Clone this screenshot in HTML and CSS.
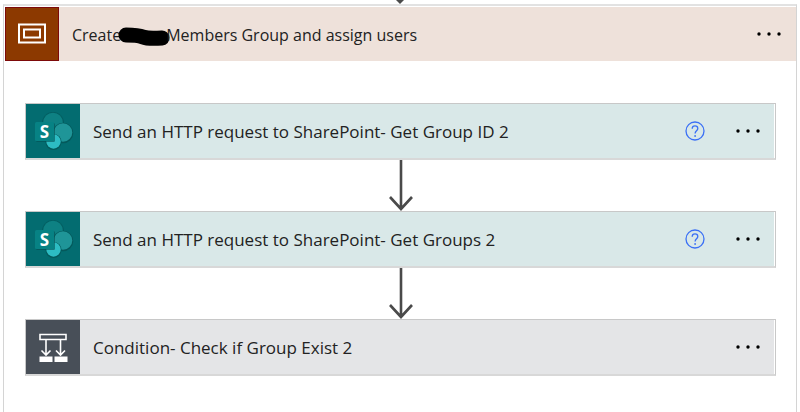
FILE: index.html
```html
<!doctype html>
<html lang="en">
  <head>
    <meta charset="UTF-8" />
    <meta name="viewport" content="width=device-width, initial-scale=1.0" />
    <title>Create Members Group and assign users</title>
    <link rel="stylesheet" href="styles.css">
  </head>
  <body>
    <!-- shared drawings -->
    <svg class="sprite" aria-hidden="true">
      <symbol id="icon-sharepoint" viewBox="0 0 54 54">
        <circle cx="27" cy="19" r="11" fill="#045e61" />
        <circle cx="27" cy="18.500" r="9.800" fill="#0e8183" />
        <circle cx="37" cy="29" r="10.300" fill="#04595b" />
        <circle cx="37" cy="28.500" r="9.300" fill="#1f9598" />
        <circle cx="27.500" cy="38" r="8" fill="#04595b" />
        <circle cx="27.500" cy="37.500" r="7.200" fill="#2dbcc3" />
        <rect x="10" y="19" width="19" height="19" rx="1.500" fill="#034f51" opacity="0.6" />
        <rect x="9" y="18" width="19" height="19" rx="1.500" fill="#078284" />
      </symbol>
      <symbol id="icon-help" viewBox="0 0 20 20">
        <circle cx="10" cy="10" r="9" fill="none" stroke="#3b70f5" stroke-width="1.300" />
        <path d="M7.200 7.700C7.200 5.900 8.400 4.900 10 4.900s2.800 1 2.800 2.600c0 2.300-2.700 2.300-2.700 5" fill="none" stroke="#3b70f5" stroke-width="1.300" />
        <circle cx="10.100" cy="15" r="0.900" fill="#3b70f5" />
      </symbol>
      <symbol id="icon-more" viewBox="0 0 26 6">
        <circle cx="3" cy="3" r="1.700" />
        <circle cx="13" cy="3" r="1.700" />
        <circle cx="23" cy="3" r="1.700" />
      </symbol>
      <symbol id="icon-arrow" viewBox="0 0 26 51">
        <path d="M13 0v49M2 37l11 12 11-12" fill="none" stroke="#4a4a4a" stroke-width="2.600" />
      </symbol>
    </svg>

    <svg class="incoming" viewBox="0 0 8 4" aria-hidden="true">
      <path d="M0 0h8L4 4z" fill="#4a4a4a" />
    </svg>

    <main class="scope">
      <header class="scope-header">
        <div class="tile tile-scope">
          <svg viewBox="0 0 54 54" aria-hidden="true">
            <path d="M14 17.500h26v18H14z M19 22.500h16v8H19z" fill="none" stroke="#fff" stroke-width="2" />
          </svg>
        </div>
        <h1 class="title">
          Create<svg class="redaction" viewBox="0 0 45 20" aria-hidden="true">
            <path d="M5 8Q17 8 22 10T41 11" fill="none" stroke="#000" stroke-width="15" stroke-linecap="round" />
          </svg>Members Group and assign users
        </h1>
        <button class="icon-btn" type="button" aria-label="Scope menu">
          <svg class="more"><use href="#icon-more" /></svg>
        </button>
      </header>

      <div class="steps">
        <section class="card card-sharepoint">
          <div class="tile">
            <svg aria-hidden="true"><use href="#icon-sharepoint" /></svg>
            <span class="tile-letter">S</span>
          </div>
          <h2 class="title">Send an HTTP request to SharePoint- Get Group ID 2</h2>
          <button class="icon-btn" type="button" aria-label="Help">
            <svg class="help"><use href="#icon-help" /></svg>
          </button>
          <button class="icon-btn" type="button" aria-label="Action menu">
            <svg class="more"><use href="#icon-more" /></svg>
          </button>
        </section>

        <svg class="arrow" aria-hidden="true"><use href="#icon-arrow" /></svg>

        <section class="card card-sharepoint">
          <div class="tile">
            <svg aria-hidden="true"><use href="#icon-sharepoint" /></svg>
            <span class="tile-letter">S</span>
          </div>
          <h2 class="title">Send an HTTP request to SharePoint- Get Groups 2</h2>
          <button class="icon-btn" type="button" aria-label="Help">
            <svg class="help"><use href="#icon-help" /></svg>
          </button>
          <button class="icon-btn" type="button" aria-label="Action menu">
            <svg class="more"><use href="#icon-more" /></svg>
          </button>
        </section>

        <svg class="arrow" aria-hidden="true"><use href="#icon-arrow" /></svg>

        <section class="card card-condition">
          <div class="tile">
            <svg viewBox="0 0 54 54" aria-hidden="true">
              <path d="M14 14.500h26v5H14z" fill="none" stroke="#fff" stroke-width="1.600" />
              <path d="M20 20v15M15.500 30.500L20 35l4.500-4.500M34.500 20v15M30 30.500l4.500 4.500 4.500-4.500" fill="none" stroke="#fff" stroke-width="1.600" />
              <path d="M13.500 36.500h13V42h-13zM28.500 36.500h13V42h-13z" fill="#fff" />
            </svg>
          </div>
          <h2 class="title">Condition- Check if Group Exist 2</h2>
          <button class="icon-btn" type="button" aria-label="Condition menu">
            <svg class="more"><use href="#icon-more" /></svg>
          </button>
        </section>
      </div>
    </main>
  </body>
</html>
```

FILE: styles.css
```css
:root {
  --line: #c8c8c8;
  --scope: #8c3900;
  --scope-light: #eee1da;
  --sharepoint: #036c70;
  --sharepoint-light: #d9e8e8;
  --condition: #484f58;
  --condition-light: #e4e5e7;
}

* {
  margin: 0;
  padding: 0;
  box-sizing: border-box;
}

body {
  min-height: 100vh;
  display: flex;
  flex-direction: column;
  background: #fff;
  color: #222;
  font-family: "Open Sans", "Segoe UI", sans-serif;
}

svg {
  display: block;
}

.sprite {
  position: absolute;
  width: 0;
  height: 0;
}

.incoming {
  width: 8px;
  height: 4px;
  align-self: center;
}

.scope {
  flex: 1;
  margin: 0 3px;
  border: 1px solid #d4d4d4;
  border-top: 2px solid #e2e2e2;
  border-bottom: 0;
}

.scope-header {
  display: flex;
  align-items: center;
  margin: 1px 0 0 1px;
  padding-right: 14px;
  background: var(--scope-light);
}

.tile {
  position: relative;
  flex: none;
  width: 54px;
  height: 54px;
}

.tile svg {
  width: 54px;
  height: 54px;
}

.tile-scope {
  background: var(--scope);
  box-shadow: inset 0 0 0 1px #7d0a0a;
}

.tile-letter {
  position: absolute;
  top: 18px;
  left: 9px;
  width: 19px;
  color: #fff;
  font-size: 17px;
  font-weight: 700;
  line-height: 19px;
  text-align: center;
}

.title {
  flex: 1;
  padding: 2px 0 0 13px;
  font-size: 17px;
  font-weight: 400;
  line-height: 24px;
}

.scope-header .title {
  font-size: 16px;
}

.redaction {
  display: inline-block;
  width: 45px;
  height: 20px;
  vertical-align: middle;
  overflow: visible;
}

.icon-btn {
  display: flex;
  border: 0;
  background: none;
  cursor: pointer;
}

.more {
  width: 26px;
  height: 6px;
}

.help {
  width: 20px;
  height: 20px;
  margin-right: 30px;
}

.steps {
  display: flex;
  flex-direction: column;
  padding: 42px 20px 36px 21px;
}

.card {
  display: flex;
  align-items: center;
  padding-right: 14px;
  border: 1px solid var(--line);
  border-bottom: 2px solid #d8d8d8;
  box-shadow: inset -1px 0 #fff;
}

.card-sharepoint {
  background: var(--sharepoint-light);
}

.card-sharepoint .tile {
  background: var(--sharepoint);
}

.card-condition {
  background: var(--condition-light);
}

.card-condition .tile {
  background: var(--condition);
}

.arrow {
  width: 26px;
  height: 51px;
  align-self: center;
}
```
